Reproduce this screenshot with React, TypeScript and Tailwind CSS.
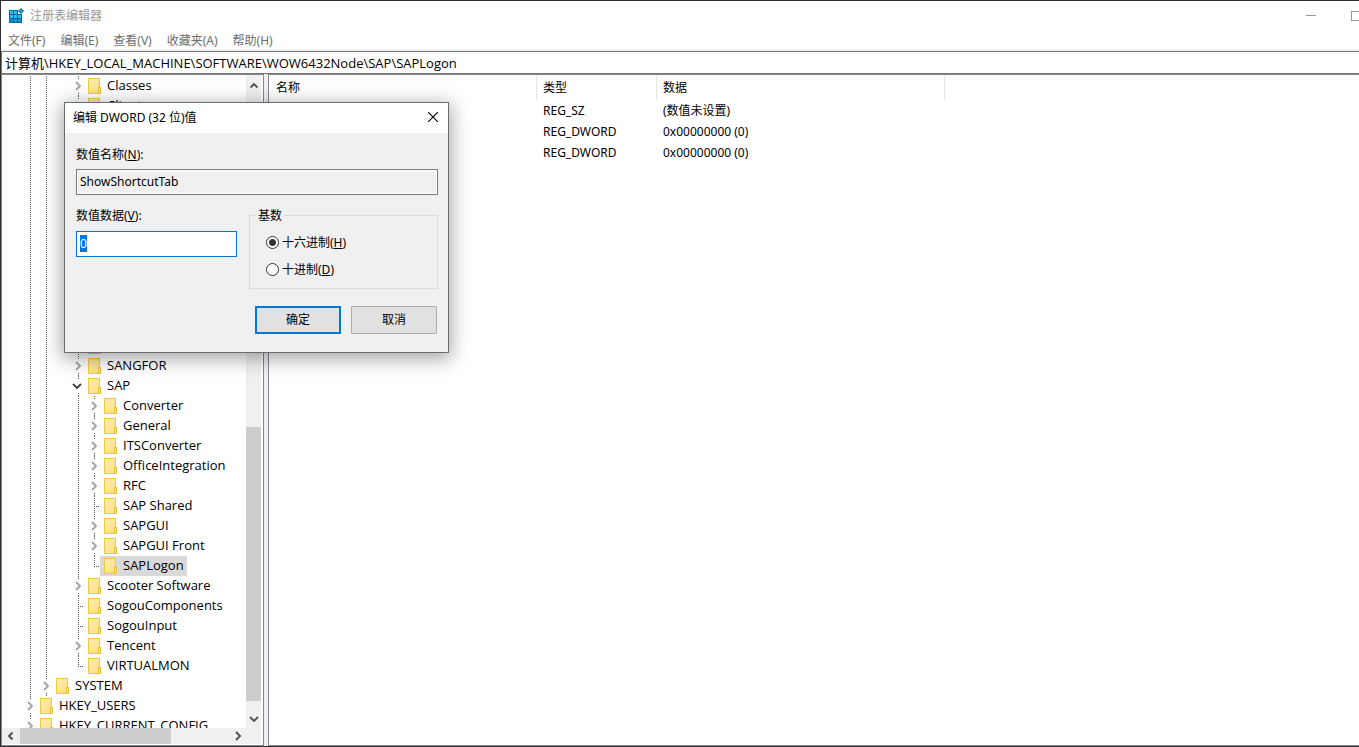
import React, { useState } from 'react';

interface TreeNode {
    name: string
    // one entry per indent level, outermost first
    guides: boolean[]
    kind: 'closed' | 'open' | 'leaf' | 'last'
    selected?: boolean
}

const L4 = [true, true, false]
const L5 = [true, true, false, true]

const topNodes: TreeNode[] = [
    { name: 'Classes', guides: L4, kind: 'closed' },
    { name: 'Clients', guides: L4, kind: 'closed' },
]

const nodes: TreeNode[] = [
    { name: 'RegisteredApplications', guides: L4, kind: 'leaf' },
    { name: 'SANGFOR', guides: L4, kind: 'closed' },
    { name: 'SAP', guides: L4, kind: 'open' },
    { name: 'Converter', guides: L5, kind: 'closed' },
    { name: 'General', guides: L5, kind: 'closed' },
    { name: 'ITSConverter', guides: L5, kind: 'closed' },
    { name: 'OfficeIntegration', guides: L5, kind: 'closed' },
    { name: 'RFC', guides: L5, kind: 'closed' },
    { name: 'SAP Shared', guides: L5, kind: 'leaf' },
    { name: 'SAPGUI', guides: L5, kind: 'closed' },
    { name: 'SAPGUI Front', guides: L5, kind: 'closed' },
    { name: 'SAPLogon', guides: L5, kind: 'last', selected: true },
    { name: 'Scooter Software', guides: L4, kind: 'closed' },
    { name: 'SogouComponents', guides: L4, kind: 'leaf' },
    { name: 'SogouInput', guides: L4, kind: 'leaf' },
    { name: 'Tencent', guides: L4, kind: 'closed' },
    { name: 'VIRTUALMON', guides: L4, kind: 'last' },
    { name: 'SYSTEM', guides: [true], kind: 'closed' },
    { name: 'HKEY_USERS', guides: [], kind: 'closed' },
    { name: 'HKEY_CURRENT_CONFIG', guides: [], kind: 'closed' },
]

const menus = ['文件(F)', '编辑(E)', '查看(V)', '收藏夹(A)', '帮助(H)']

const values = [
    { type: 'REG_SZ', data: '(数值未设置)' },
    { type: 'REG_DWORD', data: '0x00000000 (0)' },
    { type: 'REG_DWORD', data: '0x00000000 (0)' },
]

const dotsY = "w-px bg-[repeating-linear-gradient(to_bottom,#5a5a5a_0_1px,transparent_1px_2px)]"
const dotsX = "h-px bg-[repeating-linear-gradient(to_right,#5a5a5a_0_1px,transparent_1px_2px)]"

const Chevron = ({ dir, color }: { dir: 'up' | 'down' | 'left' | 'right', color: string }) => {
    const paths = {
        up: 'M1.5 6.5 5 3l3.5 3.5',
        down: 'M1 3 5 7l4-4',
        left: 'M6.5 1.5 3 5l3.5 3.5',
        right: 'M4 1 8 5 4 9',
    }
    return (
        <svg width="10" height="10" viewBox="0 0 10 10" fill="none" stroke={color} strokeWidth="1.9" className="shrink-0">
            <path d={paths[dir]} />
        </svg>
    )
}

const FolderIcon = () => (
    <svg width="16" height="16" viewBox="0 0 16 16" className="shrink-0" shapeRendering="crispEdges">
        <defs>
            <linearGradient id="folder" x1="0" y1="0" x2="1" y2="1">
                <stop offset="0" stopColor="#ffecb0" />
                <stop offset="1" stopColor="#ffdf7c" />
            </linearGradient>
        </defs>
        <rect x="0.5" y="0.5" width="11" height="15" fill="url(#folder)" stroke="#ecc94e" />
        <rect x="10.5" y="9.5" width="2" height="6" fill="#ffe9a0" stroke="#e8c040" />
    </svg>
)

const RegeditIcon = () => (
    <svg width="16" height="16" viewBox="0 0 16 16" className="shrink-0">
        <rect x="1" y="2" width="13" height="13" fill="#0b6797" />
        <g fill="#2cbdf2">
            <rect x="2" y="3" width="3" height="3" />
            <rect x="6" y="3" width="3" height="3" />
            <rect x="2" y="7" width="3" height="3" />
            <rect x="6" y="7" width="3" height="3" />
            <rect x="10" y="7" width="3" height="3" />
        </g>
        <g fill="#1593cf">
            <rect x="2" y="11" width="3" height="3" />
            <rect x="6" y="11" width="3" height="3" />
            <rect x="10" y="11" width="3" height="3" />
        </g>
        <rect x="10" y="0" width="6" height="6" fill="#fff" />
        <path d="M13 0l3 3-3 3-3-3z" fill="#0b6797" />
        <path d="M13 1.5l1.5 1.5-1.5 1.5L11.500 3z" fill="#2cbdf2" />
    </svg>
)

const Guide = ({ on }: { on: boolean }) => (
    <span className="flex w-4 shrink-0 self-stretch pl-2.5">
        {on && <span className={dotsY} />}
    </span>
)

const Expander = ({ kind }: { kind: TreeNode['kind'] }) => {
    if (kind === 'leaf' || kind === 'last') {
        return (
            <span className="flex w-4 shrink-0 flex-col self-stretch pl-2.5">
                <span className={`h-2.5 ${dotsY}`} />
                <span className={`-mb-px w-full ${dotsX}`} />
                {kind === 'leaf' && <span className={`h-2.5 ${dotsY}`} />}
            </span>
        )
    }
    return (
        <span className="flex w-4 shrink-0 flex-col justify-between self-stretch pl-1">
            <span className={`ml-1.5 h-[3px] ${dotsY}`} />
            <Chevron dir={kind === 'open' ? 'down' : 'right'} color={kind === 'open' ? '#404040' : '#a6a6a6'} />
            <span className={`ml-1.5 h-[3px] ${dotsY}`} />
        </span>
    )
}

const TreeRow = ({ node }: { node: TreeNode }) => (
    <li className="flex h-5 items-center pl-[18px]">
        {node.guides.map((on, i) => <Guide key={i} on={on} />)}
        <Expander kind={node.kind} />
        <span className={`flex h-5 items-center gap-[3px] pl-1 pr-[3px] whitespace-nowrap ${node.selected ? 'bg-[#d9d9d9]' : ''}`}>
            <FolderIcon />
            {node.name}
        </span>
    </li>
)

const EditDialog = () => {
    const [value, setValue] = useState('0')
    const [base, setBase] = useState('hex')
    const radio = "size-[13px] appearance-none rounded-full border border-[#333] bg-white checked:bg-[radial-gradient(circle,#333_0_3px,#fff_4px)]"

    return (
        <div role="dialog" aria-labelledby="dlg-title" className="absolute left-16 top-[102px] w-[385px] border border-[#6b6b6b] bg-[#f0f0f0] shadow-[0_4px_18px_2px_rgba(0,0,0,0.35)]">
            <div className="flex h-[30px] items-center justify-between bg-white pl-2 pr-2.5">
                <h2 id="dlg-title">编辑 DWORD (32 位)值</h2>
                <button type="button" aria-label="关闭" className="pb-0.5">
                    <svg width="10" height="10" viewBox="0 0 10 10" stroke="#000" strokeWidth="1.1">
                        <path d="M0 0l10 10M10 0l-10 10" />
                    </svg>
                </button>
            </div>
            <div className="pb-[18px] pl-[11px] pr-2.5 pt-3">
                <label htmlFor="value-name" className="block leading-5">数值名称(<u>N</u>):</label>
                <input
                    id="value-name"
                    readOnly
                    value="ShowShortcutTab"
                    className="mt-1 block h-[26px] w-full border border-[#7a7a7a] bg-[#f0f0f0] px-[3px] pb-0.5 shadow-[inset_0_0_0_1px_#fff] outline-none"
                />
                <div className="mt-2.5 flex gap-3">
                    <div className="w-[161px]">
                        <label htmlFor="value-data" className="block pt-0.5 leading-[18px]">数值数据(<u>V</u>):</label>
                        <input
                            id="value-data"
                            autoFocus
                            value={value}
                            onFocus={(e) => e.target.select()}
                            onChange={(e) => setValue(e.target.value)}
                            className="mt-1.5 block h-[26px] w-full border border-[#0078d7] bg-white px-[3px] pb-0.5 outline-none selection:bg-[#0078d7] selection:text-white"
                        />
                    </div>
                    <fieldset className="h-[84px] flex-1 border border-[#dcdcdc] pl-4">
                        <legend className="-ml-2.5 px-0.5 pt-0.5 leading-[18px]">基数</legend>
                        <label className="mt-[7px] flex h-5 items-center gap-[3px]">
                            <input type="radio" name="base" className={radio} checked={base === 'hex'} onChange={() => setBase('hex')} />
                            <span className="pt-0.5">十六进制(<u>H</u>)</span>
                        </label>
                        <label className="mt-[7px] flex h-5 items-center gap-[3px]">
                            <input type="radio" name="base" className={radio} checked={base === 'dec'} onChange={() => setBase('dec')} />
                            <span className="pt-0.5">十进制(<u>D</u>)</span>
                        </label>
                    </fieldset>
                </div>
                <div className="mt-[17px] flex justify-end gap-2.5 pr-px">
                    <button type="button" className="h-7 w-[86px] border-2 border-[#0078d7] bg-[#e1e1e1]">确定</button>
                    <button type="button" className="h-7 w-[86px] border border-[#adadad] bg-[#e1e1e1]">取消</button>
                </div>
            </div>
        </div>
    )
}

export default function App() {
    return (
        <div className="relative h-screen overflow-hidden bg-white font-['Noto_Sans','Noto_Sans_CJK_SC',sans-serif] text-xs text-black">
            <div className="flex h-full flex-col border-b border-l border-t border-[#2f2d30]">
                <header className="flex h-[30px] shrink-0 items-center justify-between pl-[7px] text-[#999]">
                    <div className="flex items-center gap-1.5">
                        <RegeditIcon />
                        <h1>注册表编辑器</h1>
                    </div>
                    <div className="flex items-center gap-[35px]">
                        <button type="button" aria-label="最小化" className="flex h-2.5 w-2.5 items-start pt-1"><span className="h-px w-full bg-[#999]" /></button>
                        <button type="button" aria-label="最大化" className="h-2.5 w-2 border border-r-0 border-[#999]" />
                    </div>
                </header>
                <nav className="flex h-5 shrink-0 items-center gap-[15px] border-b-2 border-[#f0f0f0] pl-[7px] pt-0.5 text-[#6d6d6d]">
                    {menus.map((m) => <button type="button" key={m}>{m}</button>)}
                </nav>
                <input
                    aria-label="地址"
                    readOnly
                    value="计算机\HKEY_LOCAL_MACHINE\SOFTWARE\WOW6432Node\SAP\SAPLogon"
                    className="h-[23px] w-full shrink-0 border border-r-0 border-[#767676] px-[3px] font-['Open_Sans','Noto_Sans_CJK_SC',sans-serif] text-[13px] outline-none"
                />
                <main className="flex min-h-0 flex-1 border-l border-[#828790] bg-[#f0f0f0]">
                    <section className="flex w-[262px] shrink-0 flex-col border-y border-r border-[#828790] bg-white pb-px pr-0.5">
                        <div className="flex min-h-0 flex-1">
                            <ul className="flex-1 overflow-hidden pt-px font-['Open_Sans',sans-serif] text-[13px]">
                                {topNodes.map((n) => <TreeRow key={n.name} node={n} />)}
                                {/* rows behind the dialog, only the guides go on */}
                                <li className="flex h-[220px] pl-[18px]">
                                    {L5.map((on, i) => <Guide key={i} on={on} />)}
                                </li>
                                {nodes.map((n) => <TreeRow key={n.name} node={n} />)}
                            </ul>
                            <div className="flex w-[15px] flex-col items-center bg-[#f0f0f0] pb-1 pt-1.5">
                                <Chevron dir="up" color="#505050" />
                                <div className="flex w-full flex-1 flex-col py-1">
                                    <div className="flex-[331]" />
                                    <div className="flex-[274] bg-[#cdcdcd]" />
                                    <div className="flex-[9]" />
                                </div>
                                <Chevron dir="down" color="#505050" />
                            </div>
                        </div>
                        <div className="flex h-4 items-center bg-[#f0f0f0] pl-1 pr-[19px]">
                            <Chevron dir="left" color="#505050" />
                            <div className="flex h-full flex-1 px-1">
                                <div className="flex-[152] bg-[#cdcdcd]" />
                                <div className="flex-[57]" />
                            </div>
                            <Chevron dir="right" color="#505050" />
                        </div>
                    </section>
                    <section className="ml-1 flex-1 border-y border-l border-[#828790] bg-white">
                        <table className="w-[676px] table-fixed border-separate border-spacing-0 text-left">
                            <thead>
                                <tr className="h-[25px] [&>th]:border-r [&>th]:border-[#e5e5e5] [&>th]:font-normal">
                                    <th className="w-[268px] pl-[7px]">名称</th>
                                    <th className="w-[120px] pl-1.5">类型</th>
                                    <th className="pl-1.5">数据</th>
                                </tr>
                            </thead>
                            <tbody>
                                {values.map((v, i) => (
                                    <tr key={i} className="h-[21px]">
                                        <td />
                                        <td className="pl-1.5">{v.type}</td>
                                        <td className="pl-1.5">{v.data}</td>
                                    </tr>
                                ))}
                            </tbody>
                        </table>
                    </section>
                </main>
            </div>
            <EditDialog />
        </div>
    )
}
